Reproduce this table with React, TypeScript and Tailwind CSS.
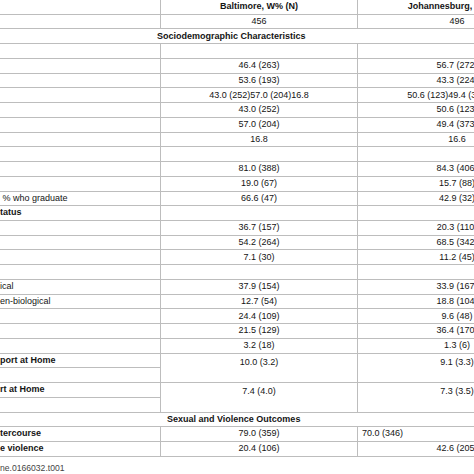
type Row =
  | { kind: "span"; text: string; pad: string }
  | { kind: "row"; label?: string; bold?: boolean; a?: string; b?: string; bLeft?: boolean; merged?: boolean };

const rows: Row[] = [
  { kind: "row", a: "Baltimore, W% (N)", b: "Johannesburg, W% (N)", bold: true },
  { kind: "row", a: "456", b: "496" },
  { kind: "span", text: "Sociodemographic Characteristics", pad: "pl-[157px]" },
  { kind: "row" },
  { kind: "row", a: "46.4 (263)", b: "56.7 (272)" },
  { kind: "row", a: "53.6 (193)", b: "43.3 (224)" },
  { kind: "row", a: "43.0 (252)57.0 (204)16.8", b: "50.6 (123)49.4 (373)16.6" },
  { kind: "row", a: "43.0 (252)", b: "50.6 (123)" },
  { kind: "row", a: "57.0 (204)", b: "49.4 (373)" },
  { kind: "row", a: "16.8", b: "16.6" },
  { kind: "row" },
  { kind: "row", a: "81.0 (388)", b: "84.3 (406)" },
  { kind: "row", a: "19.0 (67)", b: "15.7 (88)" },
  { kind: "row", label: "\u00a0% who graduate", a: "66.6 (47)", b: "42.9 (32)" },
  { kind: "row", label: "tatus", bold: true },
  { kind: "row", a: "36.7 (157)", b: "20.3 (110)" },
  { kind: "row", a: "54.2 (264)", b: "68.5 (342)" },
  { kind: "row", a: "7.1 (30)", b: "11.2 (45)" },
  { kind: "row" },
  { kind: "row", label: "ical", a: "37.9 (154)", b: "33.9 (167)" },
  { kind: "row", label: "en-biological", a: "12.7 (54)", b: "18.8 (104)" },
  { kind: "row", a: "24.4 (109)", b: "9.6 (48)" },
  { kind: "row", a: "21.5 (129)", b: "36.4 (170)" },
  { kind: "row", a: "3.2 (18)", b: "1.3 (6)" },
  { kind: "row", label: "port at Home", bold: true, a: "10.0 (3.2)", b: "9.1 (3.3)", merged: true },
  { kind: "row", label: "rt at Home", bold: true, a: "7.4 (4.0)", b: "7.3 (3.5)", merged: true },
  { kind: "span", text: "Sexual and Violence Outcomes", pad: "pl-[167px]" },
  { kind: "row", label: "tercourse", bold: true, a: "79.0 (359)", b: "70.0 (346)", bLeft: true },
  { kind: "row", label: "e violence", bold: true, a: "20.4 (106)", b: "42.6 (205)" },
];

const line = "border-[#bdbdbd]";

function TableRow({ row, first }: { row: Row; first: boolean }) {
  if (row.kind === "span") {
    return (
      <div className={`flex h-[14.74px] items-center border-b ${line} font-bold ${row.pad}`}>
        <span className="whitespace-nowrap">{row.text}</span>
      </div>
    );
  }

  const header = first;
  const cell = `flex items-center border-b ${line}`;

  if (row.merged) {
    return (
      <div className="grid grid-cols-[161px_197px_198px] grid-rows-[14.74px_14.74px]">
        <div className={`${cell} border-r font-bold`}>
          <span className="whitespace-nowrap">{row.label}</span>
        </div>
        <div className={`row-span-2 border-b border-r ${line} flex justify-center pt-[2px]`}>
          <span className="whitespace-nowrap">{row.a}</span>
        </div>
        <div className={`row-span-2 border-b ${line} flex justify-center pt-[2px]`}>
          <span className="whitespace-nowrap">{row.b}</span>
        </div>
        <div className={`${cell} border-r`} />
      </div>
    );
  }

  return (
    <div className="grid h-[14.74px] grid-cols-[161px_197px_198px]">
      <div className={`${cell} border-r ${row.bold && !header ? "font-bold" : ""}`}>
        <span className="whitespace-nowrap">{row.label}</span>
      </div>
      <div className={`${cell} border-r justify-center ${header ? "font-bold" : ""}`}>
        <span className="whitespace-nowrap">{row.a}</span>
      </div>
      <div className={`${cell} ${row.bLeft ? "justify-start pl-[4px]" : "justify-center"} ${header ? "font-bold" : ""}`}>
        <span className="whitespace-nowrap">{row.b}</span>
      </div>
    </div>
  );
}

export default function App() {
  return (
    <div className="h-[474px] w-[474px] overflow-hidden bg-white font-['Liberation_Sans',Arial,sans-serif] text-[9px] text-[#141414]">
      <div className="w-[556px]">
        {rows.map((row, i) => (
          <TableRow key={i} row={row} first={i === 0} />
        ))}
        <div className="pt-[5px] text-[8.6px] text-[#444]">ne.0166032.t001</div>
      </div>
    </div>
  );
}
